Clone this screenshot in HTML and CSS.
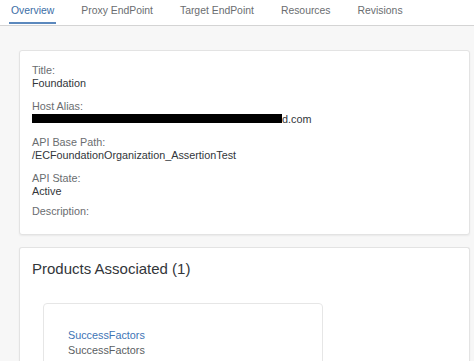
FILE: index.html
```html
<!DOCTYPE html>
<html lang="en">
<head>
  <meta charset="UTF-8" />
  <title>API Overview</title>
  <link rel="stylesheet" href="styles.css">
</head>
<body>
  <div class="tabs">
    <div class="tab active">Overview</div>
    <div class="tab">Proxy EndPoint</div>
    <div class="tab">Target EndPoint</div>
    <div class="tab">Resources</div>
    <div class="tab">Revisions</div>
  </div>
  <div class="content">
    <div class="card details">
      <div class="field">
        <div class="label">Title:</div>
        <div class="value">Foundation</div>
      </div>
      <div class="field">
        <div class="label">Host Alias:</div>
        <div class="value"><span class="redacted"></span>d.com</div>
      </div>
      <div class="field">
        <div class="label">API Base Path:</div>
        <div class="value">/ECFoundationOrganization_AssertionTest</div>
      </div>
      <div class="field">
        <div class="label">API State:</div>
        <div class="value">Active</div>
      </div>
      <div class="field description">
        <div class="label">Description:</div>
      </div>
    </div>
    <div class="card products">
      <h2>Products Associated (1)</h2>
      <div class="product">
        <a class="product-link">SuccessFactors</a>
        <div class="product-desc">SuccessFactors</div>
      </div>
    </div>
  </div>
</body>
</html>
```

FILE: styles.css
```css
html, body {
  height: 361px;
  overflow: hidden;
}
body {
  margin: 0;
  font-family: "Liberation Sans", Arial, sans-serif;
  font-size: 10.8px;
  color: #32363a;
  background: #f7f7f7;
}
.tabs {
  display: flex;
  gap: 23px;
  height: 26px;
  padding-left: 9px;
  background: #fff;
  border-bottom: 1px solid #d4d4d4;
  box-sizing: border-box;
  font-size: 10.4px;
}
.tab {
  padding: 3px 2px 0;
  color: #6a6d70;
  line-height: 16px;
}
.tab.active {
  color: #3c6ea6;
  border-bottom: 2px solid #5b88bd;
  height: 19px;
}
.content {
  padding: 24px 4px 0 19px;
}
.card {
  background: #fff;
  border: 1px solid #e3e3e3;
  border-radius: 3px;
  box-shadow: 0 1px 2px rgba(0,0,0,0.06);
}
.details {
  padding: 13px 12px 16px;
}
.field {
  margin-bottom: 10px;
  line-height: 13px;
}
.field.description {
  margin-top: -3px;
  margin-bottom: 0;
}
.label {
  color: #6a6d70;
}
.value {
  color: #32363a;
}
.redacted {
  display: inline-block;
  width: 250px;
  height: 9px;
  margin-top: 1px;
  background: #000;
  vertical-align: top;
}
.products {
  margin-top: 12px;
  padding: 11px 12px 0;
  height: 110px;
  overflow: hidden;
  border-bottom: none;
}
.products h2 {
  margin: 0;
  font-size: 15px;
  font-weight: normal;
  line-height: 20px;
  color: #32363a;
}
.product {
  margin: 24px 0 0 11px;
  width: 230px;
  height: 80px;
  padding: 24px 24px 0;
  border: 1px solid #e6e6e6;
  border-radius: 4px;
  line-height: 15px;
}
.product-link {
  display: block;
  color: #3d74b5;
}
.product-desc {
  color: #5a5e62;
}
```
